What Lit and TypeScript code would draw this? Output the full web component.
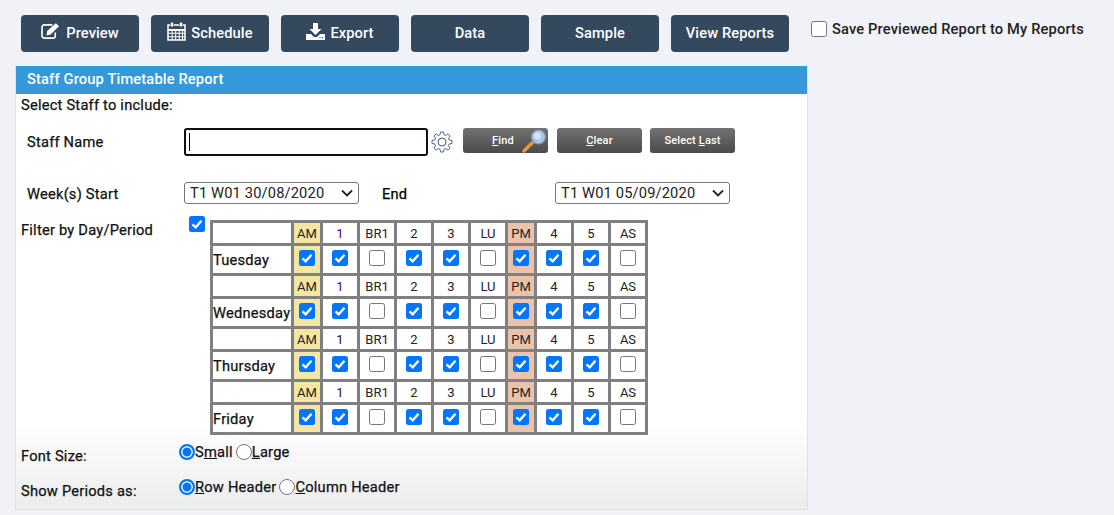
import { LitElement, html, css } from "lit";
import { customElement } from "lit/decorators.js";

const periods = ["AM", "1", "BR1", "2", "3", "LU", "PM", "4", "5", "AS"];
const unchecked = new Set(["BR1", "LU", "AS"]);
const days = ["Tuesday", "Wednesday", "Thursday", "Friday"];

const previewIcon = html`<svg class="ic" width="20" height="18" viewBox="0 0 21 19"><path d="M15 11v3.500a2.500 2.500 0 0 1-2.500 2.500h-9A2.500 2.500 0 0 1 1 14.500v-9A2.500 2.500 0 0 1 3.500 3H12" fill="none" stroke="#fff" stroke-width="1.700"/><path d="M6.500 9.500 15.500 1.300l3.500 3.300-9 8.700-4.200 1z" fill="#fff"/></svg>`;
const calIcon = html`<svg class="ic" width="19" height="20" viewBox="0 0 19 20"><path d="M1 4h17v15H1z" fill="none" stroke="#fff" stroke-width="1.500"/><path d="M1 8h17v2H1zM1 11.800h17v1H1zM1 15.200h17v1H1zM4.700 8h1v11h-1zM8.200 8h1v11h-1zM11.700 8h1v11h-1zM15 8h1v11h-1z" fill="#fff"/><rect x="3.500" y="1" width="3" height="5" rx="1.500" fill="#fff" stroke="#34495e" stroke-width=".6"/><rect x="12.500" y="1" width="3" height="5" rx="1.500" fill="#fff" stroke="#34495e" stroke-width=".6"/></svg>`;
const exportIcon = html`<svg class="ic" width="19" height="17" viewBox="0 0 19 17"><path d="M7 0h5v6h3.500L9.500 12 3.500 6H7z" fill="#fff"/><path d="M0 11h5l3 3h3l3-3h5v6H0z" fill="#fff"/><circle cx="14" cy="14.800" r=".7" fill="#34495e"/><circle cx="16.500" cy="14.800" r=".7" fill="#34495e"/></svg>`;
const gear = html`<svg class="gear" width="22" height="22" viewBox="0 0 22 22"><path d="M9.500 1h3l.5 2.800 1.700.7 2.300-1.600 2.100 2.100-1.600 2.300.7 1.700 2.800.5v3l-2.800.5-.7 1.700 1.600 2.300-2.100 2.100-2.300-1.600-1.700.7-.5 2.800h-3L9 18.200l-1.700-.7L5 19.100 2.900 17l1.600-2.300-.7-1.700L1 12.500v-3l2.800-.5.700-1.700L2.900 5 5 2.900l2.300 1.600L9 3.800z" fill="#fff" stroke="#4a6796" stroke-width="1"/><circle cx="11" cy="11" r="4" fill="#fff" stroke="#4a5868" stroke-width="1"/></svg>`;
const lens = html`<svg class="lens" width="26" height="24" viewBox="0 0 26 24"><path d="M2 22 11 13" stroke="#e8963a" stroke-width="3.400" stroke-linecap="round"/><circle cx="16.500" cy="8" r="7" fill="#a9c5e6" stroke="#7d93ad" stroke-width="1.200"/><circle cx="15.500" cy="7" r="3.500" fill="#d5e4f4"/></svg>`;
const chev = html`<svg width="12" height="8" viewBox="0 0 12 8"><path d="M1 1.500 6 6.500 11 1.500" fill="none" stroke="#222" stroke-width="1.800"/></svg>`;

@customElement("app-root")
export class AppRoot extends LitElement {
  static styles = css`
    :host {
      display: block;
      height: 515px;
      overflow: hidden;
      background: #f0f2f7;
      font-family: Roboto, "Liberation Sans", sans-serif;
      font-size: 14.67px;
      letter-spacing: 0.22px;
      -webkit-text-stroke: 0.25px currentColor;
      color: #000;
      box-sizing: border-box;
    }
    * { box-sizing: border-box; }
    .top {
      display: flex;
      padding: 15px 0 0 21px;
      height: 66px;
      align-items: flex-start;
    }
    .tb {
      width: 118px;
      height: 37px;
      margin-right: 12px;
      background: #34495e;
      color: #fff;
      border: 0;
      border-radius: 4px;
      font: 500 14.67px Roboto, sans-serif;
      letter-spacing: 0.1px;
      -webkit-text-stroke: 0;
      display: flex;
      align-items: center;
      justify-content: center;
      gap: 5px;
      padding: 0 0 2px;
    }
    .tb .ic { margin-top: -3px; flex: none; }
    .save {
      display: flex;
      align-items: center;
      margin: 5px 0 0 10px;
      font-weight: 500;
      letter-spacing: 0.15px;
      -webkit-text-stroke: 0;
      color: #222;
    }
    .save i {
      display: block;
      width: 16px;
      height: 16px;
      margin-right: 5px;
      background: #fff;
      border: 1px solid #767676;
      border-radius: 2.5px;
    }
    .panel {
      width: 793px;
      height: 444px;
      margin-left: 15px;
      border: 1px solid #dee2e6;
      border-top: 0;
      background: linear-gradient(#fff 0, #fff 355px, #ececec 100%);
      display: flex;
      flex-direction: column;
    }
    .head {
      height: 28px;
      background: #3498db;
      color: #fff;
      font-weight: 500;
      letter-spacing: 0.15px;
      -webkit-text-stroke: 0;
      padding: 0 0 2px 11px;
      display: flex;
      align-items: center;
    }
    .sel { padding: 1px 0 0 5px; height: 33px; line-height: 20px; color: #111; }
    .row { display: flex; align-items: center; }
    .lab { padding-left: 11px; color: #111; }
    .namer { height: 28px; margin-top: 1px; align-items: flex-start; }
    .namer .lab { width: 168px; line-height: 28px; }
    .input {
      width: 244px;
      height: 28px;
      border: 2px solid #101010;
      border-radius: 3px;
      background: #fff;
      display: flex;
      align-items: center;
      padding-left: 3px;
    }
    .input b { display: block; width: 1px; height: 18px; background: #000; }
    .gear { margin: 3px 0 0 3px; flex: none; }
    .gb {
      width: 85px;
      height: 25px;
      margin-right: 8px;
      border: 0;
      border-radius: 3px;
      padding: 0;
      background: linear-gradient(#737373, #4a4a4a);
      color: #fff;
      font: 500 11px Roboto, sans-serif;
      letter-spacing: 0.15px;
      -webkit-text-stroke: 0;
      display: flex;
      align-items: center;
      justify-content: center;
      position: relative;
    }
    .find { margin-left: 10px; margin-right: 9px; padding-right: 5px; }
    .lens { position: absolute; right: 0; top: 1px; }
    .week { margin-top: 26px; height: 22px; }
    .week .lab { width: 168px; padding-top: 2px; }
    .dd {
      height: 22px;
      width: 175px;
      border: 1px solid #767676;
      border-radius: 3px;
      background: #fff;
      display: flex;
      align-items: center;
      justify-content: space-between;
      padding: 0 5px;
      letter-spacing: 0.15px;
      -webkit-text-stroke: 0;
      color: #222;
    }
    .end { width: 196px; padding: 2px 0 0 23px; }
    .filter { display: flex; margin-top: 13px; align-items: flex-start; }
    .filter .tl { width: 167px; padding: 4px 0 0 5px; color: #111; }
    .cb {
      display: block;
      width: 16px;
      height: 16px;
      border-radius: 2.5px;
      background: #0075ff;
      flex: none;
    }
    .cb svg { display: block; }
    .cb.off { background: #fff; border: 1px solid #767676; }
    .master { margin: -1px 5px 0 6px; }
    table {
      border-collapse: collapse;
      border: 3px solid #808080;
      margin-top: 3px;
      background: #fff;
      table-layout: fixed;
      width: 438px;
    }
    td {
      border: 3px solid #808080;
      padding: 0;
      text-align: center;
      vertical-align: middle;
      font-size: 13px;
      letter-spacing: 0;
      -webkit-text-stroke: 0;
      color: #222;
    }
    tr.h td { height: 23px; }
    tr.c td { height: 30px; }
    td.ck { vertical-align: top; }
    td .cb { margin: 4px auto 0; }
    td.day {
      text-align: left;
      font-size: 14.67px;
      letter-spacing: 0.22px;
      -webkit-text-stroke: 0.25px currentColor;
      color: #111;
    }
    td.am { background: #f5e6a3; }
    td.pm { background: #ebc3ab; }
    td.purple { color: #4b0082; }
    .radio { height: 20px; color: #111; }
    .opts { display: flex; align-items: center; margin-top: -8px; }
    .r {
      width: 16px;
      height: 16px;
      border-radius: 50%;
      border: 1px solid #767676;
      background: #fff;
      flex: none;
    }
    .r.on { border: 2px solid #0075ff; box-shadow: inset 0 0 0 1.5px #fff; background: #0075ff; }
    .fs { margin-top: 11px; }
    .sp { margin-top: 15px; }
    .tl2 { width: 163px; padding-left: 5px; }
    .gapr { margin-left: 3px; }
  `;

  private cb(on: boolean, cls = "") {
    return html`<span class="cb ${on ? "" : "off"} ${cls}">${on
      ? html`<svg width="16" height="16" viewBox="0 0 16 16"><path d="M3.5 8.300 6.700 11.300 12.500 4.800" fill="none" stroke="#fff" stroke-width="2.400"/></svg>`
      : ""}</span>`;
  }

  render() {
    return html`
      <div class="top">
        <button class="tb">${previewIcon}Preview</button>
        <button class="tb">${calIcon}Schedule</button>
        <button class="tb">${exportIcon}Export</button>
        <button class="tb">Data</button>
        <button class="tb">Sample</button>
        <button class="tb">View Reports</button>
        <div class="save"><i></i>Save Previewed Report to My Reports</div>
      </div>
      <div class="panel">
        <div class="head">Staff Group Timetable Report</div>
        <div class="sel">Select Staff to include:</div>
        <div class="row namer">
          <div class="lab">Staff Name</div>
          <div class="input"><b></b></div>
          ${gear}
          <button class="gb find"><span><u>F</u>ind</span>${lens}</button>
          <button class="gb"><span><u>C</u>lear</span></button>
          <button class="gb"><span>Select <u>L</u>ast</span></button>
        </div>
        <div class="row week">
          <div class="lab">Week(s) Start</div>
          <div class="dd">T1 W01 30/08/2020 ${chev}</div>
          <div class="end">End</div>
          <div class="dd">T1 W01 05/09/2020 ${chev}</div>
        </div>
        <div class="filter">
          <div class="tl">Filter by Day/Period</div>
          ${this.cb(true, "master")}
          <table>
            <colgroup>
              <col style="width:81px" />
              ${periods.map((p) => html`<col style="width:${p === "AM" || p === "PM" ? 29 : 37}px" />`)}
            </colgroup>
            ${days.map(
              (d, i) => html`
                <tr class="h">
                  <td></td>
                  ${periods.map(
                    (p) =>
                      html`<td class="${p === "AM" ? "am" : p === "PM" ? "pm" : p === "1" && i < 2 ? "purple" : ""}">${p}</td>`,
                  )}
                </tr>
                <tr class="c">
                  <td class="day">${d}</td>
                  ${periods.map(
                    (p) =>
                      html`<td class="ck ${p === "AM" ? "am" : p === "PM" ? "pm" : ""}">${this.cb(!unchecked.has(p))}</td>`,
                  )}
                </tr>
              `,
            )}
          </table>
        </div>
        <div class="row radio fs">
          <div class="tl2">Font Size:</div>
          <div class="opts">
            <span class="r on"></span><span>S<u>m</u>all</span>
            <span class="r gapr"></span><span><u>L</u>arge</span>
          </div>
        </div>
        <div class="row radio sp">
          <div class="tl2">Show Periods as:</div>
          <div class="opts">
            <span class="r on"></span><span><u>R</u>ow Header</span>
            <span class="r gapr"></span><span><u>C</u>olumn Header</span>
          </div>
        </div>
      </div>
    `;
  }
}
